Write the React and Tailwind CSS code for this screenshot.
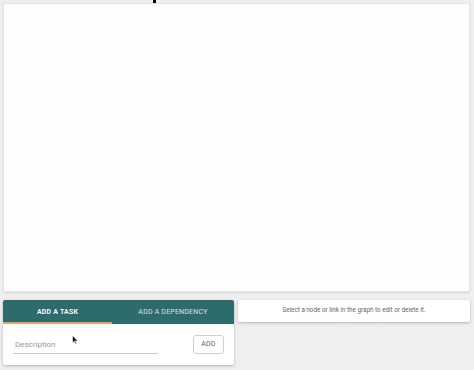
export default function App() {
  return (
    <div className="w-[474px] h-[370px] bg-[#efefef] overflow-hidden relative" style={{ fontFamily: 'Roboto, "Liberation Sans", sans-serif' }}>
      <div className="absolute left-[153px] top-0 w-[3px] h-[3px] bg-black" />
      <div className="pt-[3px] px-[3px] flex flex-col">
        <div className="h-[289px] w-[467px] bg-[#fdfdfd] border border-[#e6e6e6] rounded-[2px] shadow-[0_1px_2px_rgba(0,0,0,0.12)]" />
        <div className="flex gap-[4px] mt-[8px]">
          <div className="w-[231px] bg-white rounded-[2px] shadow-[0_1px_3px_rgba(0,0,0,0.25)] flex flex-col">
            <div className="h-[24px] bg-[#2e6b6c] flex relative rounded-t-[2px]">
              <div className="w-[109px] flex items-center justify-center text-white text-[7px] font-semibold tracking-[0.2px]">ADD A TASK</div>
              <div className="flex-1 flex items-center justify-center text-[#d6e6e6] text-[7px] tracking-[0.2px]">ADD A DEPENDENCY</div>
              <div className="absolute left-0 bottom-0 w-[109px] h-[2px] bg-[#e5a262]" />
            </div>
            <div className="h-[41px] flex items-center justify-between pl-[10px] pr-[10px]">
              <div className="w-[145px] border-b border-[#c9c9c9] pb-[2px] mt-[4px] text-[8px] text-[#9a9a9a] pl-[2px]">Description</div>
              <div className="w-[31px] h-[19px] border border-[#d0d0d0] rounded-[3px] flex items-center justify-center text-[7px] text-[#666] tracking-[0.2px]">ADD</div>
            </div>
          </div>
          <div className="w-[232px] h-[22px] bg-white rounded-[2px] shadow-[0_1px_3px_rgba(0,0,0,0.25)] flex items-center justify-center text-[6.3px] text-[#666]">
            Select a node or link in the graph to edit or delete it.
          </div>
        </div>
      </div>
      <svg className="absolute left-[72px] top-[335px]" width="7" height="10" viewBox="0 0 7 10">
        <path d="M0.5 0.5 L0.5 8 L2.3 6.3 L3.5 9 L4.6 8.5 L3.4 5.9 L5.8 5.9 Z" fill="#111" stroke="#fff" strokeWidth="0.6" />
      </svg>
    </div>
  );
}
